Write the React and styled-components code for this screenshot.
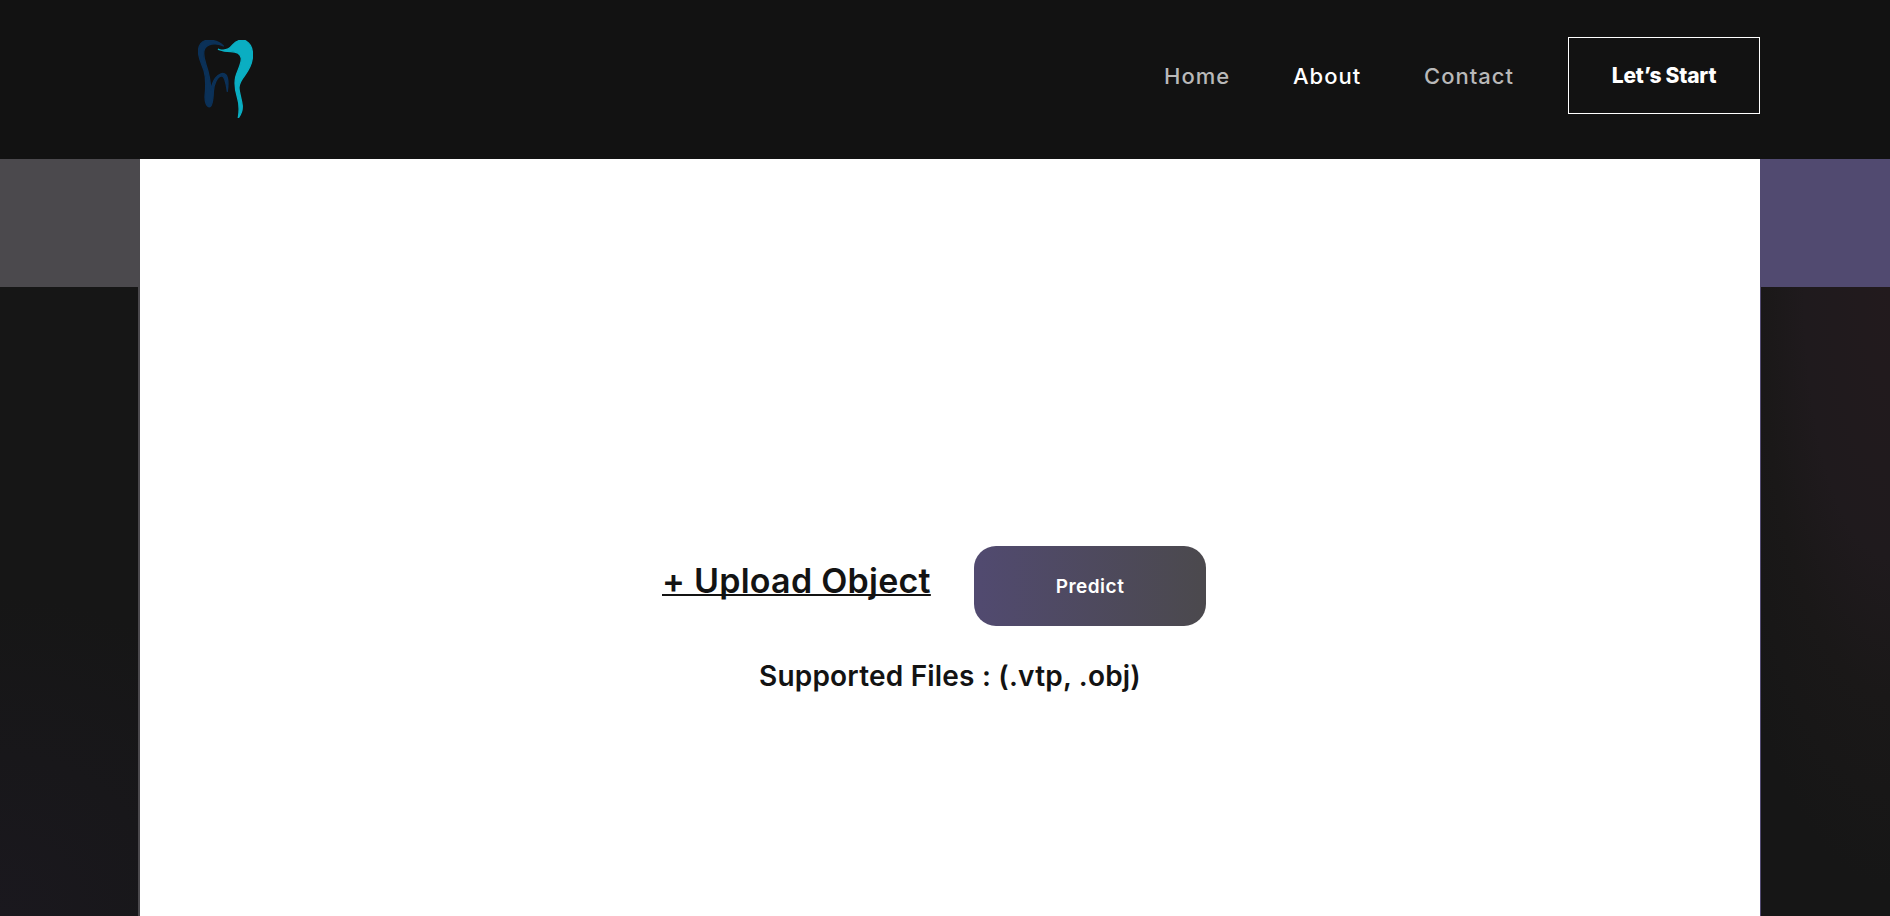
import React from "react";
import styled, { createGlobalStyle } from "styled-components";

const Global = createGlobalStyle`
  html, body { margin: 0; padding: 0; height: 100%; overflow: hidden; background: #121212; }
  #root { height: 100%; }
  * { box-sizing: border-box; }
`;

const Page = styled.div`
  display: flex;
  flex-direction: column;
  height: 916px;
  font-family: "Inter", "Liberation Sans", sans-serif;
`;

const Header = styled.header`
  flex: 0 0 159px;
  display: flex;
  align-items: center;
  justify-content: space-between;
  background: #121212;
  padding: 0 130px 9px 198px;
`;

const LogoMark = styled.svg`
  display: block;
  margin-top: 7px;
`;

const Nav = styled.nav`
  display: flex;
  align-items: center;
`;

const NavLink = styled.a`
  width: ${(p) => p.$width}px;
  margin-top: 2px;
  font-size: 22px;
  font-weight: 500;
  letter-spacing: 1px;
  white-space: nowrap;
  color: ${(p) => (p.$active ? "#ffffff" : "#b9b9b9")};
`;

const StartButton = styled.a`
  width: 192px;
  height: 77px;
  display: flex;
  align-items: center;
  justify-content: center;
  border: 1px solid #ffffff;
  color: #ffffff;
  font-size: 21px;
  font-weight: 800;
  letter-spacing: -0.2px;
`;

const Stage = styled.main`
  flex: 1;
  display: flex;
  min-height: 0;
`;

const Side = styled.div`
  flex: 0 0 ${(p) => p.$width}px;
  display: flex;
  padding-top: 128px;
  background: ${(p) => p.$band};
`;

const SideFill = styled.div`
  flex: 1;
  margin: ${(p) => p.$margin};
  background: ${(p) => p.$fill};
`;

const Panel = styled.section`
  flex: 1;
  background: #ffffff;
  display: flex;
  flex-direction: column;
  align-items: center;
  padding-top: 387px;
  color: #131313;
`;

const UploadRow = styled.div`
  display: flex;
  align-items: flex-start;
  margin-right: 32px;
`;

const UploadLink = styled.a`
  width: 312px;
  margin-top: 15px;
  font-size: 34px;
  font-weight: 600;
  line-height: 40px;
  letter-spacing: 0.25px;
  white-space: nowrap;
  color: #131313;
  text-decoration: underline;
  text-decoration-thickness: 1.5px;
  text-decoration-skip-ink: none;
  text-underline-offset: 1px;
`;

const PredictButton = styled.button`
  width: 232px;
  height: 80px;
  border: none;
  border-radius: 22px;
  background: linear-gradient(90deg, #514a70 0%, #4b494d 100%);
  color: #ffffff;
  font-family: inherit;
  font-size: 19px;
  font-weight: 600;
  letter-spacing: 0.5px;
`;

const Supported = styled.p`
  margin: 33px 0 0;
  font-size: 28px;
  font-weight: 600;
  line-height: 34px;
  letter-spacing: 0.2px;
`;

const Logo = () => (
  <LogoMark width="55" height="78" viewBox="85 57 163 235" aria-hidden="true">
    <path
      d="M160 75C148 62 132 57 112 58C95 59 85 72 85 92C85 112 95 128 102 150C108 170 108 195 105 225C104 245 110 258 118 258C126 258 129 240 130 212C131 190 142 166 155 165C164 165 169 190 172 212C175 190 174 170 168 162C160 154 146 158 136 172C129 182 125 195 122 207C121 180 116 155 108 132C102 115 97 100 103 85C110 70 135 62 160 75Z"
      fill="#0b3158"
      stroke="#0b3158"
      strokeWidth="4"
      strokeLinejoin="round"
    />
    <path
      d="M145 85C165 92 178 85 188 72C198 60 215 53 228 60C242 68 248 85 248 102C248 125 237 147 224 164C214 177 207 187 207 200C207 215 215 235 217 255C218 272 210 285 205 292C209 270 209 250 202 228C196 208 193 190 197 170C202 150 216 128 214 112C212 98 198 92 182 92C170 92 157 90 145 85Z"
      fill="#0aaec2"
      stroke="#0aaec2"
      strokeWidth="4"
      strokeLinejoin="round"
    />
  </LogoMark>
);

export default function App() {
  return (
    <Page>
      <Global />
      <Header>
        <Logo />
        <Nav>
          <NavLink $width={129}>Home</NavLink>
          <NavLink $width={131} $active>About</NavLink>
          <NavLink $width={144}>Contact</NavLink>
          <StartButton>Let’s Start</StartButton>
        </Nav>
      </Header>
      <Stage>
        <Side $width={140} $band="#4b494d">
          <SideFill $margin="0 2px 0 0" $fill="radial-gradient(circle 320px at 0% 100%, #1a181e 0%, #161616 100%)" />
        </Side>
        <Panel>
          <UploadRow>
            <UploadLink>+ Upload Object</UploadLink>
            <PredictButton>Predict</PredictButton>
          </UploadRow>
          <Supported>Supported Files : (.vtp, .obj)</Supported>
        </Panel>
        <Side $width={130} $band="#514a70">
          <SideFill $margin="0 0 0 1px" $fill="radial-gradient(ellipse 190px 600px at 100% 0%, #221a1d 0%, #1f1a1d 45%, #1a1818 68%, #161616 100%)" />
        </Side>
      </Stage>
    </Page>
  );
}
